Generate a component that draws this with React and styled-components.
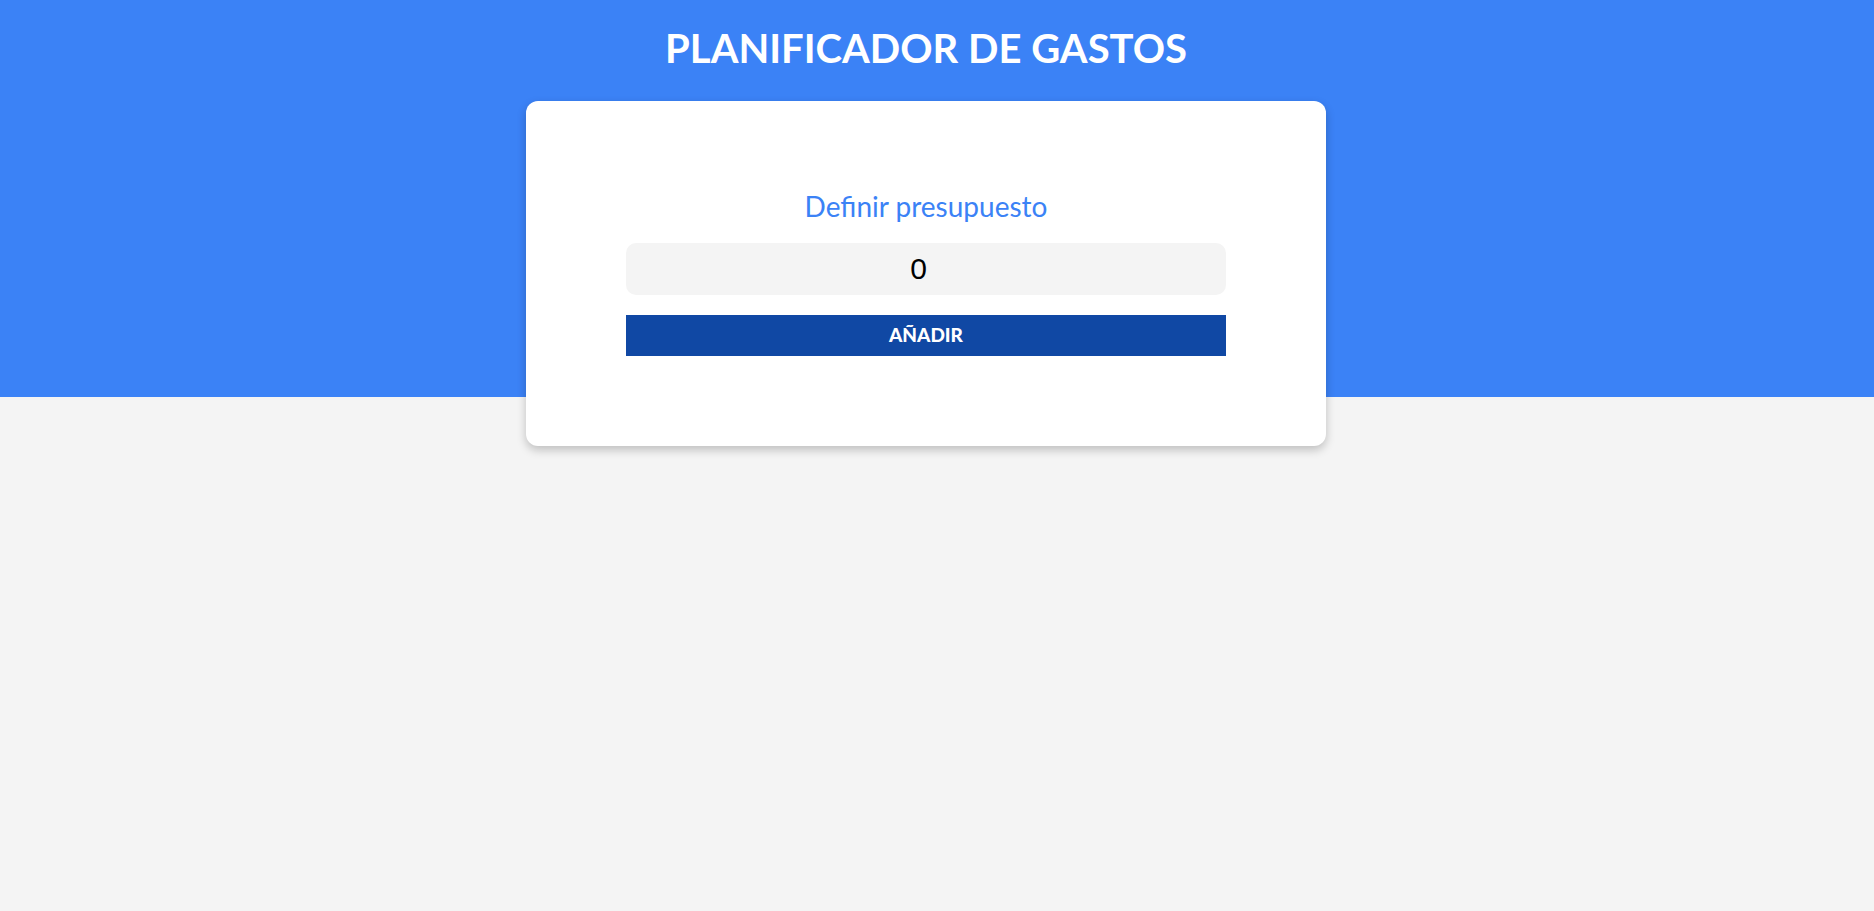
import styled, { createGlobalStyle } from "styled-components";

const GlobalStyle = createGlobalStyle`
    * {
        box-sizing: border-box;
    }
    body {
        margin: 0;
        background: #f4f4f4;
        font-family: Lato, "Open Sans", sans-serif;
    }
`;

const App = () => {
    return (
        <>
            <GlobalStyle />
            <Page>
                <Title>Planificador de gastos</Title>
                <Card>
                    <Form onSubmit={(e) => e.preventDefault()}>
                        <Label htmlFor="presupuesto">Definir presupuesto</Label>
                        <Input id="presupuesto" type="number" defaultValue={0} />
                        <Button type="submit">Añadir</Button>
                    </Form>
                </Card>
            </Page>
        </>
    );
};

// blue band on top, grey below, the card sits over the edge
const Page = styled.div`
    min-height: 100vh;
    background: linear-gradient(to bottom, #3b82f6 397px, #f4f4f4 397px);
    padding: 24px 22px 0 0;
`;

const Title = styled.h1`
    margin: 0;
    color: #fff;
    font-size: 40px;
    font-weight: 700;
    line-height: 1.2;
    text-align: center;
    text-transform: uppercase;
`;

const Card = styled.div`
    width: 800px;
    margin: 29px auto 0;
    background: #fff;
    border-radius: 12px;
    box-shadow: 0 4px 10px rgba(0, 0, 0, 0.22);
    padding: 89px 0 90px;
`;

const Form = styled.form`
    width: 600px;
    margin: 0 auto;
    display: flex;
    flex-direction: column;
`;

const Label = styled.label`
    color: #3b82f6;
    font-size: 28px;
    line-height: 1.2;
    text-align: center;
    margin-bottom: 19px;
`;

const Input = styled.input`
    border: none;
    border-radius: 10px;
    background: #f4f4f4;
    padding: 9px 10px;
    font-family: "Liberation Sans", Arial, sans-serif;
    font-size: 30px;
    line-height: 34px;
    text-align: center;
    color: #000;
    outline: none;
    margin-bottom: 20px;
`;

const Button = styled.button`
    border: none;
    background: #1048a4;
    color: #fff;
    font-family: Lato, sans-serif;
    font-weight: 900;
    font-size: 19px;
    line-height: 1.2;
    padding: 9.5px;
    text-transform: uppercase;
    cursor: pointer;
`;

export default App;
